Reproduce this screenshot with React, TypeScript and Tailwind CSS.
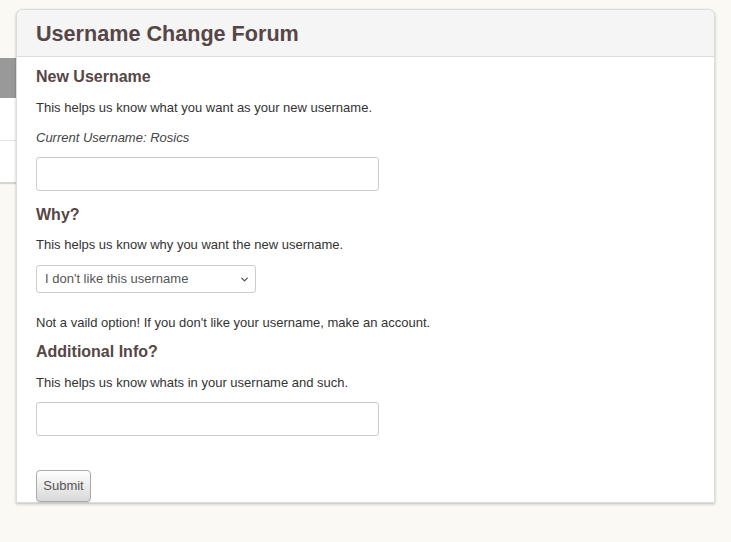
import { ChevronDown } from 'lucide-react';

const FONT = { fontFamily: '"Liberation Sans", Arial, Helvetica, sans-serif' };

function Heading({ children, className = '' }: { children: React.ReactNode; className?: string }) {
  return <h3 className={`text-[16px] leading-[20px] font-bold text-[#564646] ${className}`}>{children}</h3>;
}

function Help({ children, className = '' }: { children: React.ReactNode; className?: string }) {
  return <p className={`text-[13px] leading-[20px] text-[#333] ${className}`}>{children}</p>;
}

export default function App() {
  return (
    <div className="min-h-[542px] bg-[#fbf9f3] flex" style={FONT}>
      {/* left nav peeking out from behind the card */}
      <div className="w-[16px] shrink-0 pt-[58px]">
        <div className="h-[40px] bg-[#999]" />
        <div className="h-[43px] bg-white border-b border-[#e3e3e3]" />
        <div className="h-[41px] bg-white shadow-[0_2px_1px_rgba(0,0,0,0.15)]" />
      </div>

      <div className="mt-[9px] w-[699px] h-[494px] self-start bg-white border border-[#dcdcdc] rounded-t-[7px] shadow-[0_1px_3px_rgba(0,0,0,0.25)] flex flex-col">
        <div className="h-[47px] bg-[#f5f5f5] border-b border-[#dcdcdc] rounded-t-[7px] px-[19px] pt-[2px] flex items-center">
          <h2 className="text-[21.6px] font-bold text-[#564646] leading-none">Username Change Forum</h2>
        </div>

        <form className="px-[19px] pt-[10px] flex flex-col items-start" onSubmit={e => e.preventDefault()}>
          <Heading>New Username</Heading>
          <Help className="mt-[11px]">This helps us know what you want as your new username.</Help>
          <p className="mt-[10px] text-[13px] leading-[20px] italic text-[#444]">Current Username: Rosics</p>
          <input
            type="text"
            className="mt-[9px] w-[343px] h-[34px] border border-[#ccc] rounded-[3px] bg-white px-2 text-[13px] outline-none"
          />

          <Heading className="mt-[14px]">Why?</Heading>
          <Help className="mt-[10px]">This helps us know why you want the new username.</Help>
          <div className="mt-[10px] relative w-[220px] h-[28px] border border-[#ccc] rounded-[3px] bg-white flex items-center pl-[8px] text-[13px] text-[#555]">
            <span>I don't like this username</span>
            <ChevronDown className="absolute right-[5px] top-[8px] w-[11px] h-[11px] text-[#555]" strokeWidth={3} />
          </div>

          <Help className="mt-[20px]">Not a vaild option! If you don't like your username, make an account.</Help>
          <Heading className="mt-[9px]">Additional Info?</Heading>
          <Help className="mt-[11px]">This helps us know whats in your username and such.</Help>
          <input
            type="text"
            className="mt-[9px] w-[343px] h-[34px] border border-[#ccc] rounded-[3px] bg-white px-2 text-[13px] outline-none"
          />

          <button
            type="submit"
            className="mt-[34px] w-[55px] h-[32px] rounded-[4px] border border-[#aaa] bg-gradient-to-b from-white to-[#d8d8d8] text-[13px] text-[#555] shadow-[0_1px_1px_rgba(0,0,0,0.1)]"
          >
            Submit
          </button>
        </form>
      </div>
    </div>
  );
}
